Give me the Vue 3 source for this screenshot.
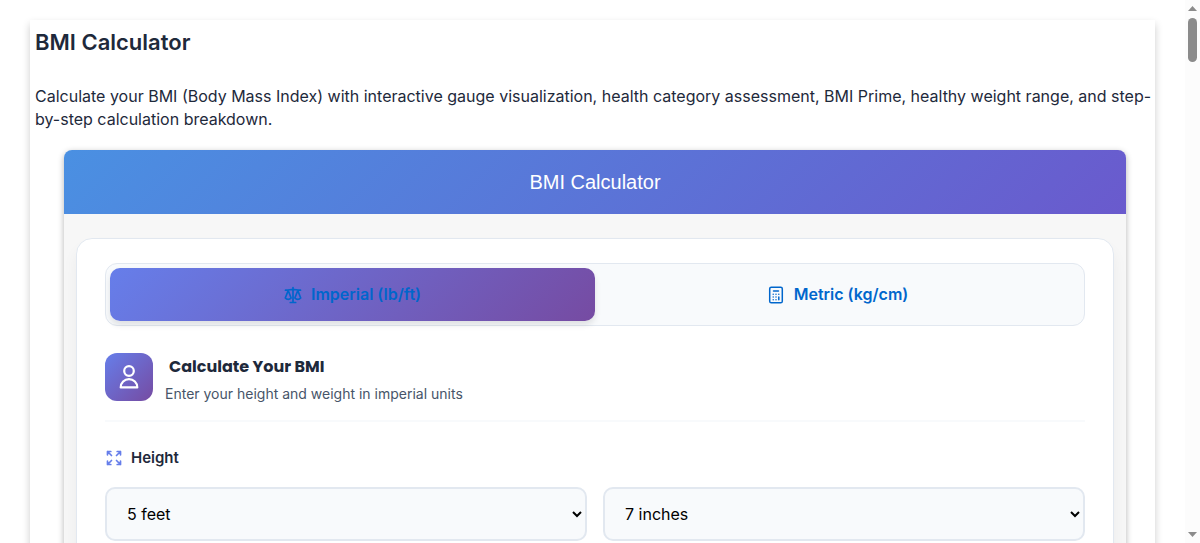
<script setup>
import { ref } from 'vue'

const units = ref('imperial')
const feet = ref(5)
const inches = ref(7)
const feetOptions = [3, 4, 5, 6, 7]
const inchOptions = [0, 1, 2, 3, 4, 5, 6, 7, 8, 9, 10, 11]
</script>

<template>
  <div class="viewport">
    <main class="page">
      <article class="sheet">
        <h1 class="title">BMI Calculator</h1>
        <p class="intro">
          Calculate your BMI (Body Mass Index) with interactive gauge visualization, health category
          assessment, BMI Prime, healthy weight range, and step-by-step calculation breakdown.
        </p>

        <section class="calculator">
          <header class="banner">BMI Calculator</header>
          <div class="body">
            <div class="panel">
              <div class="tabs">
                <button type="button" class="tab" :class="{ active: units === 'imperial' }" @click="units = 'imperial'">
                  <svg class="tab-icon" viewBox="0 0 18 18" fill="none" stroke="currentColor" stroke-width="1.7" stroke-linecap="round" stroke-linejoin="round">
                    <path d="M9 1.5v15M6.300 16.500h5.400M1.500 4.200c3 .2 5-.9 7.500-.9s4.500 1.100 7.500.9M4.200 4.500 1.300 12c1.600 1.700 4.200 1.700 5.800 0zM13.800 4.500 10.900 12c1.600 1.700 4.200 1.700 5.800 0z" />
                  </svg>
                  <span>Imperial (lb/ft)</span>
                </button>
                <button type="button" class="tab" :class="{ active: units === 'metric' }" @click="units = 'metric'">
                  <svg class="tab-icon" viewBox="0 0 18 18" fill="none" stroke="currentColor" stroke-width="1.5" stroke-linecap="round" stroke-linejoin="round">
                    <rect x="2.700" y="1.200" width="12.600" height="15.600" rx="1.600" />
                    <path d="M6.500 4.900h5" />
                    <path d="M6.200 8.300h.01M9 8.300h.01M11.800 8.300h.01M6.200 11h.01M9 11h.01M6.200 13.700h.01M9 13.700h.01M11.800 11v2.700" />
                  </svg>
                  <span>Metric (kg/cm)</span>
                </button>
              </div>

              <div class="section-head">
                <div class="badge">
                  <svg viewBox="0 0 24 24" fill="none" stroke="currentColor" stroke-width="2.200" stroke-linecap="round" stroke-linejoin="round">
                    <circle cx="12" cy="6" r="4.800" />
                    <path d="M3.700 22.400a8.300 8.300 0 0 1 16.600 0z" />
                  </svg>
                </div>
                <div class="head-text">
                  <h2>Calculate Your BMI</h2>
                  <p>Enter your height and weight in imperial units</p>
                </div>
              </div>

              <div class="field">
                <label class="field-label" for="feet">
                  <svg class="field-icon" viewBox="0 0 18 18" fill="none" stroke="currentColor" stroke-width="1.700" stroke-linecap="round" stroke-linejoin="round">
                    <path d="M6.500 6.500 2.500 2.500M2.500 5.800V2.500h3.300M11.500 6.500l4-4M12.200 2.500h3.300v3.300M6.500 11.500l-4 4M2.500 12.200v3.300h3.300M11.500 11.500l4 4M12.200 15.500h3.300v-3.300" />
                  </svg>
                  Height
                </label>
                <div class="selects">
                  <select id="feet" v-model="feet" aria-label="Height, feet">
                    <option v-for="n in feetOptions" :key="n" :value="n">{{ n }} feet</option>
                  </select>
                  <select id="inches" v-model="inches" aria-label="Height, inches">
                    <option v-for="n in inchOptions" :key="n" :value="n">{{ n }} inches</option>
                  </select>
                </div>
              </div>
            </div>
          </div>
        </section>
      </article>
    </main>
    <div class="scrollbar" aria-hidden="true">
      <svg class="arrow" viewBox="0 0 9 5"><path d="M0 5 4.500 0 9 5z" /></svg>
      <div class="track"><div class="thumb"></div></div>
      <svg class="arrow" viewBox="0 0 9 5"><path d="M0 0h9L4.500 5z" /></svg>
    </div>
  </div>
</template>

<style>
body {
  margin: 0;
  background: #fff;
}
</style>

<style scoped>
* {
  box-sizing: border-box;
}
.viewport {
  display: flex;
  height: 100vh;
  overflow: hidden;
  font-family: Inter, "Liberation Sans", sans-serif;
  font-size: 16px;
  color: #1e293b;
}
.page {
  flex: 1;
  min-width: 0;
  padding: 20px 30px;
}
.sheet {
  min-height: 100vh;
  padding: 5px 0 5px 5px;
  background: #fff;
  box-shadow: 0 4px 8px rgba(0, 0, 0, 0.2);
}
.title {
  margin: 0 0 25px;
  font-size: 22px;
  line-height: 35px;
  font-weight: 600;
}
.intro {
  margin: 0 0 19px;
  line-height: 23px;
}
.calculator {
  margin: 0 29px;
  border-radius: 8px;
  background: #f7f7f7;
  box-shadow: 0 2px 6px rgba(0, 0, 0, 0.3);
  overflow: hidden;
}
.banner {
  padding: 16px;
  background: linear-gradient(135deg, #4a90e2, #6a5acd);
  color: #fff;
  font-family: "Liberation Sans", Arial, sans-serif;
  font-size: 20px;
  line-height: 32px;
  text-align: center;
}
.body {
  padding: 24px 12px;
}
.panel {
  padding: 24px 28px;
  border: 1px solid #e2e8f0;
  border-radius: 16px;
  background: #fff;
  box-shadow: 0 10px 15px rgba(0, 0, 0, 0.05);
}
.tabs {
  display: flex;
  padding: 4px;
  border: 1px solid #e2e8f0;
  border-radius: 12px;
  background: #f8fafc;
}
.tab {
  flex: 1;
  display: flex;
  align-items: center;
  justify-content: center;
  gap: 9px;
  padding: 14px 20px;
  border: 0;
  border-radius: 10px;
  background: transparent;
  color: #0066cc;
  font: 600 16px/25px Inter, "Liberation Sans", sans-serif;
  cursor: pointer;
}
.tab.active {
  background: linear-gradient(135deg, #667eea, #764ba2);
  box-shadow: 0 4px 6px rgba(0, 0, 0, 0.1);
}
.tab-icon {
  width: 18px;
  height: 18px;
}
.section-head {
  display: flex;
  align-items: flex-start;
  gap: 12px;
  margin: 27px 0 24px;
  padding-bottom: 15px;
  border-bottom: 2px solid #f8fafc;
}
.badge {
  display: flex;
  align-items: center;
  justify-content: center;
  width: 48px;
  height: 48px;
  border-radius: 12px;
  background: linear-gradient(135deg, #667eea, #764ba2);
  color: #fff;
}
.badge svg {
  width: 24px;
  height: 24px;
}
.head-text h2 {
  margin: 0 0 3px;
  padding: 0 4px;
  font: 700 16px/27px Poppins, Inter, sans-serif;
}
.head-text p {
  margin: 0;
  color: #475569;
  font-size: 14px;
  line-height: 22px;
}
.field-label {
  display: flex;
  align-items: center;
  gap: 8px;
  margin-bottom: 17px;
  font-size: 15px;
  line-height: 24px;
  font-weight: 600;
}
.field-icon {
  width: 18px;
  height: 18px;
  color: #667eea;
}
.selects {
  display: grid;
  grid-template-columns: 1fr 1fr;
  gap: 16px;
}
select {
  width: 100%;
  height: 54px;
  padding: 0 0 0 16px;
  border: 2px solid #e2e8f0;
  border-radius: 10px;
  background: #f8fafc;
  color: #000;
  font: 400 16px/24px Inter, "Liberation Sans", sans-serif;
}
.scrollbar {
  display: flex;
  flex-direction: column;
  align-items: center;
  width: 15px;
  padding: 6px 0;
  background: #fcfcfc;
}
.arrow {
  width: 9px;
  height: 5px;
  fill: #8b8b8b;
}
.track {
  flex: 1;
  padding: 7px 0;
}
.thumb {
  width: 9px;
  height: 44px;
  border-radius: 5px;
  background: #8b8b8b;
}
</style>
